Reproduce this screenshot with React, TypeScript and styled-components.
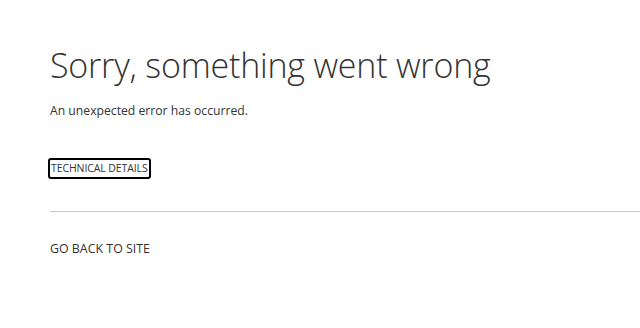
import styled, { createGlobalStyle } from "styled-components";

const GlobalStyle = createGlobalStyle`
  html, body {
    margin: 0;
    padding: 0;
    background: #ffffff;
  }
  body {
    font-family: "Open Sans", "Noto Sans", sans-serif;
    color: #333333;
  }
`;

const Page = styled.div`
  padding: 41px 0 0 50px;
`;

const Title = styled.h1`
  margin: 0;
  font-size: 34px;
  font-weight: 300;
  line-height: 48px;
  color: #333333;
  letter-spacing: -0.2px;
`;

const Message = styled.p`
  margin: 13px 0 0;
  font-size: 12.2px;
  line-height: 18px;
  color: #333333;
`;

const DetailsButton = styled.button`
  margin: 38px 0 0 -2px;
  padding: 2px 1px;
  font-family: "Open Sans", "Noto Sans", sans-serif;
  font-size: 10.5px;
  line-height: 13px;
  letter-spacing: -0.1px;
  text-transform: uppercase;
  color: #333333;
  background: transparent;
  border: 2px solid #000000;
  border-radius: 3px;
  cursor: pointer;
`;

const Divider = styled.hr`
  margin: 32px 0 0;
  border: none;
  border-top: 1px solid #c8c8c8;
`;

const BackLink = styled.a`
  display: inline-block;
  margin-top: 29px;
  font-size: 12.4px;
  line-height: 16px;
  color: #333333;
  text-decoration: none;
  text-transform: uppercase;
`;

export default function App() {
  return (
    <>
      <GlobalStyle />
      <Page>
        <Title>Sorry, something went wrong</Title>
        <Message>An unexpected error has occurred.</Message>
        <DetailsButton>Technical Details</DetailsButton>
        <Divider />
        <BackLink href="#">Go back to site</BackLink>
      </Page>
    </>
  );
}
